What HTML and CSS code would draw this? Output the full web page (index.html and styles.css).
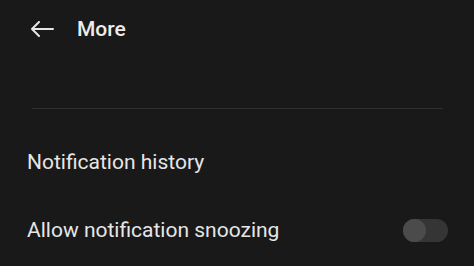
FILE: index.html
```html
<!DOCTYPE html>
<html>
<head>
<meta charset="utf-8">
<link rel="stylesheet" href="styles.css">
</head>
<body>
<div class="screen">
  <header class="appbar">
    <svg class="back" width="24" height="16" viewBox="0 0 24 16" aria-hidden="true">
      <path d="M23 8H2M9 1L2 8l7 7" fill="none" stroke="#e6e6e6" stroke-width="2" stroke-linecap="round" stroke-linejoin="round"/>
    </svg>
    <h1 class="title">More</h1>
  </header>
  <div class="divider"></div>
  <div class="row row-first">Notification history</div>
  <div class="row row-toggle">
    <span>Allow notification snoozing</span>
    <span class="switch"><span class="thumb"></span></span>
  </div>
</div>
</body>
</html>
```
FILE: styles.css
```css
html, body {
  margin: 0;
  padding: 0;
  background: #191919;
}
.screen {
  width: 474px;
  height: 266px;
  overflow: hidden;
  font-family: Roboto, "Liberation Sans", sans-serif;
  color: #e8e8e8;
}
.appbar {
  display: flex;
  align-items: center;
  height: 57px;
  padding-left: 30px;
}
.back {
  display: block;
}
.title {
  margin: 0 0 0 23px;
  font-size: 21px;
  font-weight: 500;
  line-height: 24px;
  color: #ececec;
}
.divider {
  margin: 51px 31px 0 32px;
  height: 1px;
  background: #2f2f2f;
}
.row {
  font-size: 21px;
  line-height: 24px;
  padding-left: 27px;
  color: #e6e6e6;
}
.row-first {
  margin-top: 41px;
}
.row-toggle {
  display: flex;
  align-items: center;
  justify-content: space-between;
  padding-right: 26px;
  margin-top: 44px;
}
.switch {
  width: 45px;
  height: 23px;
  border-radius: 12px;
  background: #353535;
  display: flex;
  align-items: center;
}
.thumb {
  width: 23px;
  height: 23px;
  border-radius: 50%;
  background: #4b4b4b;
}
```
